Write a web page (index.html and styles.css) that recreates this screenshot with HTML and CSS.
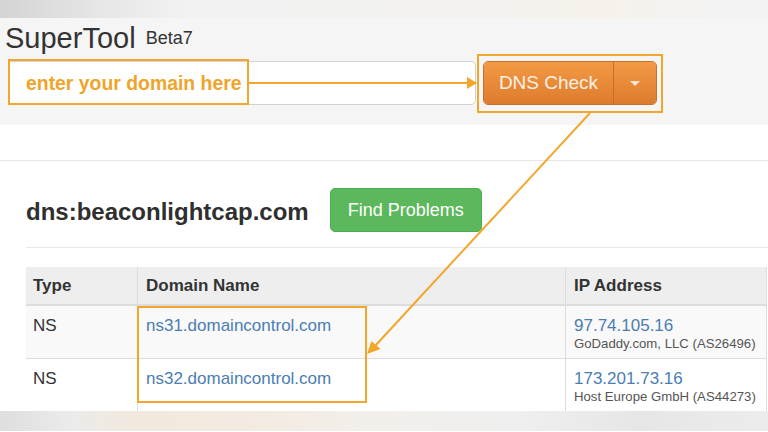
FILE: index.html
```html
<!DOCTYPE html>
<html lang="en">
<head>
  <meta charset="UTF-8">
  <title>SuperTool - DNS Check</title>
  <link rel="stylesheet" href="styles.css">
</head>
<body>
  <div class="top-strip"></div>

  <div class="header">
    <h1 class="brand">SuperTool <span class="beta">Beta7</span></h1>
    <div class="search-row">
      <div class="domain-input">enter your domain here</div>
      <div class="btn-split">
        <button class="btn-main">DNS Check</button>
        <button class="btn-caret"><span class="caret"></span></button>
      </div>
    </div>
  </div>

  <div class="main">
    <div class="result-head">
      <h2>dns:beaconlightcap.com</h2>
      <button class="btn-green">Find Problems</button>
    </div>

    <table class="records">
      <thead>
        <tr>
          <th class="col-type">Type</th>
          <th class="col-name">Domain Name</th>
          <th class="col-ip">IP Address</th>
        </tr>
      </thead>
      <tbody>
        <tr>
          <td>NS</td>
          <td><a href="#">ns31.domaincontrol.com</a></td>
          <td><a href="#">97.74.105.16</a><div class="asn">GoDaddy.com, LLC (AS26496)</div></td>
        </tr>
        <tr>
          <td>NS</td>
          <td><a href="#">ns32.domaincontrol.com</a></td>
          <td><a href="#">173.201.73.16</a><div class="asn">Host Europe GmbH (AS44273)</div></td>
        </tr>
      </tbody>
    </table>
  </div>

  <div class="bottom-strip"></div>

  <!-- tutorial annotations drawn over the page -->
  <svg class="notes" width="768" height="432" viewBox="0 0 768 432">
    <rect x="9" y="60" width="239" height="44" />
    <line x1="249" y1="83" x2="468" y2="83" />
    <polygon points="467,77 477,83 467,89" />
    <rect x="478" y="55" width="184" height="57" />
    <line x1="590" y1="113" x2="375" y2="346" />
    <polygon points="380.5,349 371.5,341 367,354" />
    <rect x="138" y="307" width="228" height="95" />
  </svg>
</body>
</html>
```

FILE: styles.css
```css
body {
  margin: 0;
  width: 768px;
  height: 432px;
  overflow: hidden;
  position: relative;
  font-family: "Liberation Sans", Arial, sans-serif;
  color: #333;
  background: #fff;
}
.top-strip {
  height: 18px;
  background: linear-gradient(90deg, #d4d4d4 0, #e6e6e6 100px, #f1f1f1 180px, #f3f2f0 480px, #f6f1ea 600px, #f3f3f3 720px);
}
.header {
  background: #f5f5f5;
  height: 107px;
  padding-top: 4px;
  box-sizing: border-box;
}
.brand {
  margin: 0;
  padding-left: 5px;
  font-size: 29px;
  font-weight: normal;
  line-height: 32px;
  color: #333;
}
.beta {
  font-size: 18px;
  margin-left: 2px;
  vertical-align: 4px;
}
.search-row {
  display: flex;
  gap: 7px;
  margin-top: 7px;
  padding-left: 8px;
}
.domain-input {
  width: 468px;
  height: 44px;
  box-sizing: border-box;
  background: #fff;
  border: 1px solid #d2d2d2;
  border-radius: 0 5px 5px 0;
  padding-left: 17px;
  line-height: 42px;
  font-size: 19.4px;
  font-weight: bold;
  color: #f0a42a;
}
.btn-split {
  display: flex;
  height: 44px;
  border-radius: 5px;
  overflow: hidden;
  border: 1px solid #c9712a;
  box-sizing: border-box;
}
.btn-split button {
  border: 0;
  margin: 0;
  background: linear-gradient(#f39a45, #dd7b2d);
  color: #fcf0e4;
  font-family: "Liberation Sans", Arial, sans-serif;
  cursor: pointer;
}
.btn-main {
  width: 130px;
  font-size: 19px;
  border-right: 1px solid #c76e27 !important;
}
.btn-caret {
  width: 42px;
}
.caret {
  display: inline-block;
  border-top: 5px solid #f8e6d4;
  border-left: 5px solid transparent;
  border-right: 5px solid transparent;
  vertical-align: middle;
}
.main {
  margin-top: 35px;
  border-top: 1px solid #e6e6e6;
  padding-left: 26px;
  height: 251px;
  box-sizing: border-box;
}
.result-head {
  display: flex;
  align-items: center;
  gap: 21px;
  margin-top: 27px;
  padding-bottom: 15px;
  border-bottom: 1px solid #e8e8e8;
}
.result-head h2 {
  margin: 0;
  font-size: 24px;
  line-height: 24px;
  padding-top: 4px;
  color: #2f2f2f;
}
.btn-green {
  height: 44px;
  padding: 0 17px;
  border: 1px solid #4cae4c;
  border-radius: 5px;
  background: #5cb85c;
  color: #fff;
  font-family: "Liberation Sans", Arial, sans-serif;
  font-size: 18px;
}
.records {
  margin-top: 19px;
  width: 741px;
  border-collapse: collapse;
  font-size: 17px;
}
.records th {
  background: #eee;
  text-align: left;
  padding: 9px 8px 8px;
  line-height: 20px;
  border-bottom: 2px solid #ddd;
  border-right: 1px solid #ddd;
}
.records td {
  vertical-align: top;
  padding: 9px 8px 6px;
  line-height: 21px;
  border-top: 1px solid #ddd;
  border-right: 1px solid #ddd;
}
.records td:first-child,
.records th:first-child {
  padding-left: 7px;
}
.records tbody tr:nth-child(odd) td {
  background: #f9f9f9;
}
.records tbody tr:last-child td {
  border-bottom: 1px solid #ddd;
}
.col-type {
  width: 96px;
}
.col-name {
  width: 411px;
}
.records a {
  color: #4b7db3;
  text-decoration: none;
}
.asn {
  font-size: 13.2px;
  line-height: 16px;
  color: #555;
}
.bottom-strip {
  height: 20px;
  background: linear-gradient(90deg, #dedede 0, #ebebeb 70px, #f1e9de 130px, #f3ebe1 250px, #f2efeb 380px, #efefef 520px, #e6e6e6 640px, #ececec 768px);
}
.notes {
  position: absolute;
  left: 0;
  top: 0;
  pointer-events: none;
}
.notes rect,
.notes line {
  fill: none;
  stroke: #f2a62c;
  stroke-width: 2;
}
.notes polygon {
  fill: #f2a62c;
}
```
